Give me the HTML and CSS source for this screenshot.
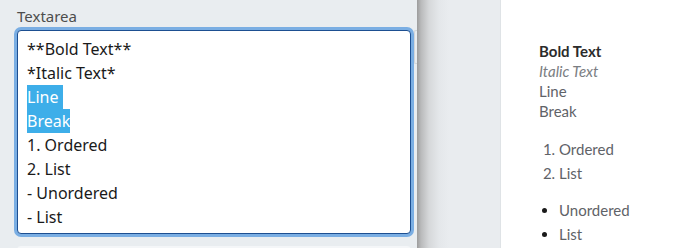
FILE: index.html
```html
<!DOCTYPE html>
<html lang="en">
  <head>
    <meta charset="UTF-8" />
    <meta name="viewport" content="width=device-width, initial-scale=1.0" />
    <title>Markdown Textarea</title>
    <link rel="stylesheet" href="styles.css">
  </head>
  <body>
    <div class="layout">
      <div class="editor">
        <label class="field-label">Textarea</label>
        <div class="textarea">
          <div>**Bold Text**</div>
          <div>*Italic Text*</div>
          <div><span class="selected">Line&nbsp;</span></div>
          <div><span class="selected">Break</span></div>
          <div>1. Ordered</div>
          <div>2. List</div>
          <div>- Unordered</div>
          <div>- List</div>
        </div>
        <div class="next-field"></div>
        <div class="scroll-thumb"></div>
      </div>

      <div class="gutter"></div>

      <div class="preview">
        <p>
          <strong>Bold Text</strong><br />
          <em>Italic Text</em><br />
          Line<br />
          Break
        </p>
        <ol>
          <li>Ordered</li>
          <li>List</li>
        </ol>
        <ul>
          <li>Unordered</li>
          <li>List</li>
        </ul>
      </div>
    </div>
  </body>
</html>
```

FILE: styles.css
```css
body {
  margin: 0;
  padding: 0;
  overflow: hidden;
}

.layout {
  display: flex;
  height: 248px;
  overflow: hidden;
}

.editor {
  position: relative;
  width: 417px;
  flex-shrink: 0;
  background: #e9edf0;
  padding: 6px 0 0 17px;
  box-sizing: border-box;
  font-family: "Noto Sans", sans-serif;
}

.field-label {
  display: block;
  font-size: 15px;
  line-height: 20px;
  color: #4d4d4d;
  margin-bottom: 4px;
}

.textarea {
  width: 394px;
  height: 204px;
  box-sizing: border-box;
  background: #fff;
  border: 1px solid #1d4f91;
  border-radius: 4px;
  box-shadow: 0 0 0 3px #7aaee3;
  padding: 6px 9px;
  font-size: 16px;
  line-height: 24px;
  color: #1a1a1a;
}

.selected {
  background: #3daee9;
  color: #fff;
  padding: 1px 0;
}

.next-field {
  width: 394px;
  height: 20px;
  margin-top: 12px;
  background: #f4f6f8;
  border-radius: 4px;
}

.scroll-thumb {
  position: absolute;
  top: 30px;
  right: 0;
  width: 2px;
  height: 32px;
  border: 1px solid #d3d6d9;
  border-right: none;
  border-radius: 2px 0 0 2px;
}

.gutter {
  width: 83px;
  flex-shrink: 0;
  background: linear-gradient(to right, #9c9c9c 0, #b9babb 4px, #d6d8da 12px, #e4e7ea 22px, #e9ecef 32px);
  border-right: 1px solid #dfe3e6;
}

.preview {
  flex: 1;
  background: #fff;
  padding: 41px 0 0 38px;
  font-family: Lato, sans-serif;
  font-size: 15px;
  color: #5f6368;
}

.preview p {
  margin: 0;
  line-height: 20px;
}

.preview strong {
  color: #2b2b2b;
}

.preview em {
  color: #7a7d82;
}

.preview ol,
.preview ul {
  margin: 0;
  padding-left: 20px;
  line-height: 24px;
}

.preview ol {
  margin-top: 16px;
}

.preview ul {
  margin-top: 13px;
}

.preview ul li::marker {
  color: #1a1a1a;
}
```
